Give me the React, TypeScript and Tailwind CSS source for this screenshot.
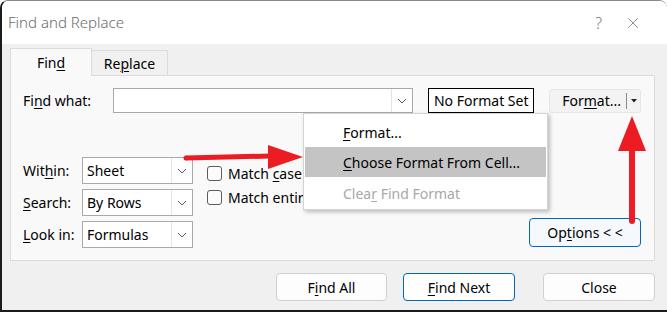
import React from 'react';
import { X } from 'lucide-react';

const font = { fontFamily: '"Noto Sans", "Open Sans", sans-serif' };

const Key = ({ children }: { children: React.ReactNode }) => (
    <span className="underline underline-offset-2 decoration-1">{children}</span>
);

const Chevron = () => (
    <svg width="10" height="6" viewBox="0 0 10 6" className="text-[#5a5a5a]">
        <path d="M1 1 L5 5 L9 1" fill="none" stroke="currentColor" strokeWidth="1" />
    </svg>
);

const Select = ({ value }: { value: string }) => (
    <div className="w-[111px] h-[27px] flex bg-white border border-[#a9a9a9]">
        <div className="flex-1 flex items-center pl-[4px] text-[14px] text-black">{value}</div>
        <div className="w-[21px] flex items-center justify-center border-l border-[#e3e3e3]">
            <Chevron />
        </div>
    </div>
);

const Checkbox = ({ children }: { children: React.ReactNode }) => (
    <div className="flex items-center h-[24px] gap-[6px]">
        <div className="w-[15px] h-[15px] rounded-[3px] border border-[#5c5c5c] bg-[#fbfbfb]" />
        <span className="text-[14px] text-black whitespace-nowrap">{children}</span>
    </div>
);

const Button = ({ children, primary, w }: { children: React.ReactNode; primary?: boolean; w: string }) => (
    <div
        className={`${w} h-[28px] flex items-center justify-center rounded-[4px] text-[14px] text-black ${
            primary ? 'border border-[#0067c0] bg-white' : 'border border-[#d0d0d0] bg-[#fdfdfd]'
        }`}
    >
        <span>{children}</span>
    </div>
);

const MenuItem = ({ children, className }: { children: React.ReactNode; className: string }) => (
    <div className={`flex items-center pl-[38px] ${className}`}>
        <span className="whitespace-nowrap">{children}</span>
    </div>
);

const Arrows = () => (
    <svg width="667" height="312" className="absolute -left-[2px] -top-[1px] pointer-events-none">
        <g fill="#ed1c24" stroke="none">
            <path d="M186 155.5 L270 153.5 L270 158.5 L186 160.5 Z" />
            <circle cx="186" cy="158" r="2.5" />
            <path d="M268 145 L303 157 L268 169 Z" />
            <rect x="629" y="146" width="6" height="76" />
            <circle cx="632" cy="221" r="3" />
            <path d="M632 116 L646 151 L618 151 Z" />
        </g>
    </svg>
);

export default function App() {
    return (
        <div
            style={font}
            className="relative w-[667px] h-[312px] overflow-hidden bg-[#f0f0f0] border-l-2 border-b-2 border-t border-l-[#1c1c1c] border-b-[#1c1c1c] border-t-[#8a8a8a] rounded-t-[8px]"
        >
            {/* title bar */}
            <div className="h-[43px] bg-white flex items-center pl-[6px] pr-[25px]">
                <span className="text-[15px] text-[#6b6b6b] font-light">Find and Replace</span>
                <span className="ml-auto text-[16px] text-[#7a7a7a] font-light">?</span>
                <X className="ml-[22px] w-[18px] h-[18px] text-[#6b6b6b]" strokeWidth={1} />
            </div>

            {/* tabs */}
            <div className="pt-[4px] pl-[8px] flex items-start">
                <div className="relative z-10 w-[82px] h-[28px] -mb-px bg-[#f9f9f9] border border-b-0 border-[#dcdcdc] flex items-center justify-center text-[14px] text-black">
                    <span>
                        Fin<Key>d</Key>
                    </span>
                </div>
                <div className="mt-[2px] w-[76px] h-[25px] bg-[#f0f0f0] border border-l-0 border-b-0 border-[#dcdcdc] flex items-center justify-center text-[14px] text-black">
                    <span>
                        Re<Key>p</Key>lace
                    </span>
                </div>
            </div>

            {/* tab panel */}
            <div className="ml-[8px] w-[645px] h-[186px] bg-[#f9f9f9] border border-[#dcdcdc] pl-[12px] pr-[13px] pt-[12px] flex flex-col">
                <div className="flex items-center h-[25px]">
                    <div className="w-[90px] text-[14px] text-black">
                        Fi<Key>n</Key>d what:
                    </div>
                    <div className="w-[301px] h-[25px] flex bg-white border border-[#a9a9a9]">
                        <div className="flex-1" />
                        <div className="w-[21px] flex items-center justify-center border-l border-[#e3e3e3]">
                            <Chevron />
                        </div>
                    </div>
                    <div className="ml-[15px] w-[106px] h-[25px] bg-white border border-black flex items-center justify-center text-[14px] text-black">
                        No Format Set
                    </div>
                    <div className="ml-[15px] w-[92px] h-[24px] flex items-center bg-[#f3f3f3] border border-[#e6e6e6] rounded-[3px]">
                        <div className="flex-1 flex justify-end pr-[5px] text-[14px] text-black">
                            <span>
                                For<Key>m</Key>at...
                            </span>
                        </div>
                        <div className="w-px h-[16px] bg-[#8a8a8a]" />
                        <div className="w-[13px] flex items-center justify-center">
                            <svg width="6" height="4" viewBox="0 0 6 4">
                                <path d="M0 0 L6 0 L3 3.5 Z" fill="#222" />
                            </svg>
                        </div>
                    </div>
                </div>

                <div className="mt-[44px] flex items-start">
                    <div className="grid grid-cols-[59px_111px] gap-y-[5px] items-center">
                        <div className="text-[14px] text-black">
                            Wit<Key>h</Key>in:
                        </div>
                        <Select value="Sheet" />
                        <div className="text-[14px] text-black">
                            <Key>S</Key>earch:
                        </div>
                        <Select value="By Rows" />
                        <div className="text-[14px] text-black">
                            <Key>L</Key>ook in:
                        </div>
                        <Select value="Formulas" />
                    </div>

                    <div className="ml-[14px] mt-[4px] flex flex-col">
                        <Checkbox>
                            Match <Key>c</Key>ase
                        </Checkbox>
                        <Checkbox>
                            Match entire cell c<Key>o</Key>ntents
                        </Checkbox>
                    </div>

                    <div className="ml-auto self-end mb-[1px] w-[112px] h-[29px] flex items-center justify-center rounded-[4px] border border-[#0067c0] bg-[#f5f9fd] text-[14px] text-black">
                        <span>
                            Op<Key>t</Key>ions &lt; &lt;
                        </span>
                    </div>
                </div>
            </div>

            {/* bottom buttons */}
            <div className="mt-[12px] pr-[12px] flex justify-end">
                <Button w="w-[111px]">
                    F<Key>i</Key>nd All
                </Button>
                <div className="ml-[16px]">
                    <Button w="w-[112px]" primary>
                        <Key>F</Key>ind Next
                    </Button>
                </div>
                <div className="ml-[28px]">
                    <Button w="w-[112px]">Close</Button>
                </div>
            </div>

            {/* format dropdown menu */}
            <div className="absolute left-[301px] top-[112px] w-[245px] h-[97px] bg-white border border-[#d4d4d4] shadow-[2px_2px_4px_rgba(0,0,0,0.25)] pt-[4px] px-[1px] text-[14px]">
                <MenuItem className="h-[29px] text-black">
                    <Key>F</Key>ormat...
                </MenuItem>
                <MenuItem className="h-[30px] bg-[#c4c4c4] text-black">
                    <Key>C</Key>hoose Format From Cell...
                </MenuItem>
                <MenuItem className="h-[32px] text-[#a8a8a8]">
                    Clea<Key>r</Key> Find Format
                </MenuItem>
            </div>

            <Arrows />
        </div>
    );
}
